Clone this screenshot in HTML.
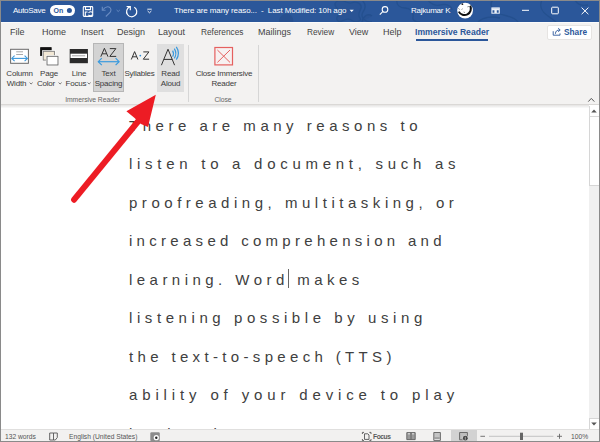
<!DOCTYPE html>
<html><head><meta charset="utf-8">
<style>
*{margin:0;padding:0;box-sizing:border-box}
html,body{width:600px;height:442px;overflow:hidden;background:#fff}
body{position:relative;font-family:"Liberation Sans",sans-serif;color:#444}
.a{position:absolute;white-space:pre}
#title{left:0;top:0;width:600px;height:22px;background:#2b579a;border-top:1px solid #8a8a8a}
#tabs{left:0;top:22px;width:600px;height:82px;background:#f3f2f1;border-top:1px solid #fbfbfb}
.tab{top:27px;font-size:9px;line-height:10px;color:#444}
.rl{font-size:8px;line-height:10.3px;color:#3c3c3c;text-align:center;letter-spacing:-0.2px}
.gl{font-size:6.8px;line-height:9px;color:#666;text-align:center;letter-spacing:-0.1px}
.doc{left:129px;font-size:15px;line-height:18px;color:#404040}
#status{left:0;top:429px;width:600px;height:13px;background:#f2f1f0;border-top:1px solid #e0dfde}
.st{top:432px;font-size:6.7px;line-height:9px;color:#555}
svg{position:absolute;left:0;top:0}
</style></head><body>
<!-- title bar -->
<div class="a" id="title"></div>
<svg width="600" height="22" viewBox="0 0 600 22" fill="none" style="top:0;clip-path:inset(1px 0 0 0)">
 <g stroke="#24508e" stroke-width="1.3" fill="#2a5495" opacity="0.9">
  <path d="M279 22 C279 17 283 13 288 14 C292 15 294 19 293 22 Z" stroke="none" fill="#27508f"/>
  <path d="M338 1 C343 -1 348 4 351 3 C356 1 362 3 361 8 C360 12 357 14 360 18 C362 21 356 23 353 21 C349 18 346 19 342 21 C338 23 335 19 338 16 C340 13 339 10 336 7 C334 4 335 2 338 1 Z"/>
  <path d="M362 22 C363 16 368 13 372 16"/>
  <path d="M362 0 C366 4 366 8 363 12 C360 17 364 22 372 22" fill="none"/>
  <path d="M397 0 C396 5 400 8 405 8 C410 8 414 12 413 17 C412 20 415 22 420 22" fill="none"/>
  <path d="M428 0 C430 4 436 6 440 5 C446 3 452 6 452 10" fill="none"/>
  <path d="M493 0 C488 5 494 12 500 14 C507 16 515 17 518 22" fill="none"/>
  <path d="M478 22 C483 17 492 16 500 18" fill="none"/>
  <path d="M542 0 C539 6 542 12 548 16 C552 19 555 21 556 22" fill="none"/>
  <path d="M575 0 C577 4 582 6 588 5" fill="none"/>
 </g>
</svg>
<div class="a" style="left:13px;top:5.6px;font-size:8px;line-height:9px;color:#fff;letter-spacing:-0.3px">AutoSave</div>
<div class="a" style="left:50px;top:5px;width:25px;height:11px;border-radius:6px;background:#fff"></div>
<div class="a" style="left:53.5px;top:6px;font-size:7px;line-height:9px;color:#2b579a;font-weight:bold">On</div>

<div class="a" style="left:174px;top:5.6px;font-size:8px;line-height:9px;color:#fff;letter-spacing:-0.11px">There are many reaso...  -  Last Modified: 10h ago</div>
<div class="a" style="left:411px;top:5.6px;font-size:8px;line-height:9px;color:#fff;letter-spacing:-0.25px">Rajkumar K</div>

<!-- tabs -->
<div class="a" id="tabs"></div>
<div class="a tab" style="left:10px">File</div>
<div class="a tab" style="left:42px">Home</div>
<div class="a tab" style="left:81px">Insert</div>
<div class="a tab" style="left:117px">Design</div>
<div class="a tab" style="left:158px">Layout</div>
<div class="a tab" style="left:201px;font-size:8.3px">References</div>
<div class="a tab" style="left:258px">Mailings</div>
<div class="a tab" style="left:307px;font-size:8.3px">Review</div>
<div class="a tab" style="left:349px">View</div>
<div class="a tab" style="left:383px">Help</div>
<div class="a tab" style="left:415px;font-weight:bold;color:#2b579a;font-size:8.6px">Immersive Reader</div>
<div class="a" style="left:415.5px;top:39px;width:72.5px;height:2px;background:#2b579a"></div>
<div class="a" style="left:547px;top:25px;width:45px;height:15px;background:#fff;border:1px solid #e6e4e2;border-radius:2px"></div>
<div class="a tab" style="left:564px;font-weight:bold;color:#2b579a;font-size:8.3px">Share</div>

<!-- ribbon -->
<div class="a" style="left:93px;top:43px;width:31px;height:49px;background:#d3d3d3;border:1px solid #b6b6b6"></div>
<div class="a" style="left:157px;top:44px;width:27px;height:48px;background:#dfdfdf"></div>
<div class="a rl" style="left:0px;top:69px;width:39px">Column<br>Width   </div>
<div class="a rl" style="left:34px;top:69px;width:30px">Page<br>Color   </div>
<div class="a rl" style="left:64px;top:69px;width:30px">Line<br>Focus   </div>
<div class="a rl" style="left:93px;top:69px;width:31px">Text<br>Spacing</div>
<div class="a rl" style="left:123px;top:69px;width:33px">Syllables</div>
<div class="a rl" style="left:157px;top:69px;width:27px">Read<br>Aloud</div>
<div class="a rl" style="left:184px;top:69px;width:80px">Close Immersive<br>Reader</div>
<div class="a gl" style="left:47.5px;top:95px;width:90px;letter-spacing:-0.05px">Immersive Reader</div>
<div class="a gl" style="left:188px;top:95px;width:70px">Close</div>
<div class="a" style="left:188px;top:45px;width:1px;height:57px;background:#d6d6d6"></div>
<div class="a" style="left:258px;top:45px;width:1px;height:57px;background:#d6d6d6"></div>
<div class="a" style="left:0;top:104px;width:600px;height:1px;background:#dad8d6"></div>
<div class="a" style="left:0;top:105px;width:589px;height:3px;background:linear-gradient(#e4e3e2,#fbfbfb)"></div>

<!-- document -->
<div class="a doc" style="top:117px;letter-spacing:4.517px">There are many reasons to</div>
<div class="a doc" style="top:155px;letter-spacing:4.725px">listen to a document, such as</div>
<div class="a doc" style="top:194px;letter-spacing:4.528px">proofreading, multitasking, or</div>
<div class="a doc" style="top:232px;letter-spacing:4.292px">increased comprehension and</div>
<div class="a doc" style="top:271px;letter-spacing:4.458px">learning. Word makes</div>
<div class="a doc" style="top:309px;letter-spacing:4.577px">listening possible by using</div>
<div class="a doc" style="top:348px;letter-spacing:4.343px">the text-to-speech (TTS)</div>
<div class="a doc" style="top:386px;letter-spacing:4.859px">ability of your device to play</div>
<div class="a doc" style="top:425px;letter-spacing:4.7px">back written text as</div>
<div class="a" style="left:288px;top:269px;width:1px;height:19px;background:#666"></div>

<!-- scrollbar -->
<div class="a" style="left:589px;top:106px;width:10px;height:323px;background:#f0f0f0"></div>
<div class="a" style="left:589px;top:106px;width:10px;height:11px;background:#fff;border-left:1px solid #d9d9d9;border-bottom:1px solid #d9d9d9"></div>
<div class="a" style="left:589px;top:117px;width:10px;height:69px;background:#fff;border-left:1px solid #d6d6d6;border-bottom:1px solid #d6d6d6"></div>
<div class="a" style="left:589px;top:418px;width:10px;height:11px;background:#fff;border-left:1px solid #d6d6d6;border-top:1px solid #d6d6d6"></div>

<!-- status -->
<div class="a" id="status"></div>
<div class="a" style="left:451px;top:430px;width:26px;height:11px;background:#d2d2d2"></div>
<div class="a st" style="left:5px">132 words</div>
<div class="a st" style="left:69px">English (United States)</div>
<div class="a st" style="left:373px;font-weight:bold;letter-spacing:-0.45px;color:#5a5a5a">Focus</div>
<div class="a st" style="left:571px">100%</div>

<svg width="600" height="442" viewBox="0 0 600 442" fill="none">
 <!-- title bar icons -->

 <circle cx="69.4" cy="10.4" r="2.5" fill="#2b579a"/>
 <g stroke="#fff" stroke-width="1.1">
  <rect x="83.3" y="6.6" width="9.4" height="9.8" rx="0.8"/>
  <path d="M85.5 6.8 V9.6 H90.5 V6.8"/>
  <path d="M85.3 16.2 V12 H87.5"/>
 </g>
 <g stroke="#fff" stroke-width="1.1">
  <path d="M88.6 13 A2.4 2.4 0 0 1 92.6 12.6"/>
  <path d="M92.4 14.5 A2.4 2.4 0 0 1 88.4 14.9"/>
 </g>
 <g stroke="#6a8cc2" stroke-width="1.1">
  <path d="M102.6 10 C104.5 7.5 107 6.2 109 7 C111.3 8 111.5 10.5 110 12.5 L105.8 16.5"/>
  <path d="M102.3 6.8 V10.3 H105.6"/>
  <path d="M116.6 10 L118.2 11.5 L119.8 10" stroke-width="0.9"/>
 </g>
 <g stroke="#fff" stroke-width="1.2">
  <path d="M134.3 7.3 A5.1 5.1 0 1 1 129.9 6.9"/>
  <path d="M126.6 6.5 H130.3 V10.2"/>
 </g>
 <g stroke="#fff" stroke-width="0.9">
  <path d="M147.3 9.2 H151.7"/>
  <path d="M147.6 11 L149.5 12.8 L151.4 11"/>
 </g>
 <path d="M349.6 9.8 H353.8 L351.7 12.1 Z" fill="#fff"/>
 <g stroke="#fff" stroke-width="1.1">
  <circle cx="385" cy="9.4" r="2.8"/>
  <path d="M383 11.4 L379.8 14.6"/>
 </g>
 <circle cx="465.1" cy="10.6" r="7.9" fill="#fff"/>
 <path d="M458.8 11.6 A6.3 6.3 0 1 0 470.2 5.8" stroke="#111" stroke-width="2"/>
 <circle cx="462.4" cy="4.2" r="0.9" fill="#222"/>
 <path d="M458.4 8.2 L459.6 9.6 M467.3 6.9 L469 6.4 M463.6 12 L465 12.6 M461.5 9.5 L462.7 8.8" stroke="#888" stroke-width="0.9"/>
 <g stroke="#fff" stroke-width="1">
  <rect x="491.4" y="7.4" width="8.4" height="6.3" fill="#eef2f8" stroke="none"/>
  <path d="M492.5 10.2 H494.4 V12.8 H492.5 Z M496.8 10.2 H498.7 V12.8 H496.8 Z" fill="#2b579a" stroke="none"/>
  <path d="M492.3 8.6 H498.9" stroke="#c9d4e6" stroke-width="0.8"/>
  <path d="M522 10.3 H529"/>
  <rect x="551.7" y="7.2" width="6.6" height="6.6" rx="0.8"/>
  <path d="M581.6 7.6 L588.4 14.2 M588.4 7.6 L581.6 14.2"/>
 </g>
 <g stroke="#2b579a" stroke-width="0.9">
  <path d="M553.2 31.2 V35.2 H560 V33.4"/>
  <path d="M555.4 33.8 C555.6 31 557 30 559.8 30"/>
  <path d="M558.2 28.2 L560.2 30 L558.2 31.8"/>
 </g>
 <!-- ribbon icons -->
 <rect x="10.6" y="49.3" width="17.8" height="14" fill="#fff" stroke="#6a6a6a" stroke-width="1"/>
 <path d="M16.2 51.8 H23 M16.2 54.5 H23" stroke="#a9a9a9" stroke-width="1"/>
 <g stroke="#3c98dc" stroke-width="1.1">
  <path d="M12 58.4 H27.2"/>
  <path d="M14.6 55.6 L11.8 58.4 L14.6 61.2 M24.6 55.6 L27.4 58.4 L24.6 61.2"/>
 </g>
 <rect x="40.6" y="47.6" width="10.6" height="8" fill="#111" stroke="#111" stroke-width="0.8"/>
 <rect x="43.2" y="51.3" width="11.2" height="8.8" fill="#f3e9d6" stroke="#fff" stroke-width="2.2"/>
 <rect x="43.2" y="51.3" width="11.2" height="8.8" fill="#f3e9d6" stroke="#7a7a7a" stroke-width="0.9"/>
 <rect x="47" y="56.3" width="11" height="8.7" fill="#fff" stroke="#fff" stroke-width="2.2"/>
 <rect x="47" y="56.3" width="11" height="8.7" fill="#fff" stroke="#666" stroke-width="0.9"/>
 <rect x="69.7" y="49" width="18.2" height="14.2" fill="#2b2b2b"/>
 <rect x="70.5" y="53.7" width="16.5" height="4.3" fill="#fff"/>
 <path d="M72 55.8 H85.2" stroke="#999" stroke-width="0.9"/>
 <g stroke="#333" stroke-width="1" stroke-linejoin="miter">
  <path d="M100.8 56.7 L104.4 48.3 L108 56.7 M102.1 53.8 H106.8"/>
  <path d="M109.8 48.6 H115.9 L109.8 56.4 H116.2"/>
 </g>
 <g stroke="#3a9ade" stroke-width="1.2">
  <path d="M98.4 61.7 H119"/>
  <path d="M101.8 58.2 L98.3 61.7 L101.8 65.2 M115.6 58.2 L119.1 61.7 L115.6 65.2"/>
 </g>
 <g stroke="#333" stroke-width="1">
  <path d="M131.3 59.5 L134.6 51.6 L137.9 59.5 M132.5 56.8 H136.7"/>
  <path d="M143.3 51.9 H148.9 L143.3 59.2 H149.1"/>
 </g>
 <circle cx="140.3" cy="55.6" r="0.9" fill="#2f8fd8"/>
 <g stroke="#333" stroke-width="1">
  <path d="M161.4 65.2 L168 49.2 L174.6 65.2 M163.8 59.4 H172.2"/>
 </g>
 <g stroke="#3a9ade" stroke-width="1.2">
  <path d="M172.6 50.6 Q174.4 53.6 172.6 56.6"/>
  <path d="M174.3 48.6 Q177.4 53.5 174.3 58.3"/>
  <path d="M176.3 46.9 Q180.6 53.3 176.3 59.7"/>
 </g>
 <rect x="214.9" y="47.5" width="17.6" height="17.4" fill="#f7f1f1" stroke="#e5605f" stroke-width="1.2"/>
 <path d="M217.4 50 L230 62.4 M230 50 L217.4 62.4" stroke="#e5605f" stroke-width="1"/>
 <g stroke="#555" stroke-width="0.8">
  <path d="M29.6 82.6 L31.1 84 L32.6 82.6"/>
  <path d="M58.6 82.6 L60.1 84 L61.6 82.6"/>
  <path d="M87.6 82.6 L89.1 84 L90.6 82.6"/>
 </g>
 <path d="M588.3 101.6 L591.3 98.4 L594.3 101.6" stroke="#555" stroke-width="1"/>
 <!-- scroll arrows -->
 <path d="M591.2 112.6 L594 109.6 L596.8 112.6 Z" fill="#555"/>
 <path d="M591.2 422.6 L594 425.6 L596.8 422.6 Z" fill="#555"/>
 <!-- red arrow -->
 <path d="M74.1 199.7 L138 121.5" stroke="#ed1c24" stroke-width="6" stroke-linecap="round"/>
 <path d="M155.8 94.8 L126.4 111.3 L134 117.6 L141 124 L148 127 Z" fill="#ed1c24"/>
 <!-- status icons -->
 <g stroke="#555" stroke-width="0.9">
  <path d="M49.7 433 H53.5 V440 H49.7 Z M53.5 433 H57.3 V437.5 L55.3 440 H53.5"/>
 </g>
 <rect x="150.3" y="432.3" width="9.5" height="8.8" rx="1.2" fill="#8c8c8c"/>
 <circle cx="156.3" cy="437.7" r="2.6" fill="#fff"/>
 <circle cx="156.3" cy="437.7" r="1.2" fill="#222"/>
 <g stroke="#555" stroke-width="0.9">
  <path d="M362.4 434 V432.4 H364 M369.4 432.4 H371 V434 M371 439 V440.6 H369.4 M364 440.6 H362.4 V439"/>
  <path d="M364.5 433.8 H367.8 L369 435 V439.4 H364.5 Z"/>
 </g>
 <g stroke="#606060" stroke-width="0.9">
  <path d="M406.8 432.6 H415.2 V439.6 H406.8 Z" fill="#9a9a9a"/>
  <path d="M411 432.8 V439.6"/>
  <path d="M433.8 432.5 H440.4 V440.4 H433.8 Z" fill="#c4c4c4"/>
  <path d="M434.6 438.2 H439.6" stroke="#555"/>
  <path d="M459.6 432.5 H467.4 V439.8 H459.6 Z" fill="#bdbdbd"/>
 </g>
 <path d="M407.8 433.8 H410 M412 433.8 H414.2" stroke="#eee" stroke-width="0.9"/>
 <path d="M434.5 439.2 H439.7" stroke="#f4f4f4" stroke-width="0.9"/>
 <circle cx="465.3" cy="438.2" r="3" fill="#d2d2d2"/>
 <circle cx="465.3" cy="438.2" r="2.4" fill="#444"/>
 <path d="M465.3 436.8 V439.8" stroke="#ccc" stroke-width="0.7"/>
 <g stroke="#666" stroke-width="0.9">
  <path d="M480.4 436.3 H485 M557 436.3 H562 M559.5 433.8 V438.8"/>
 </g>
 <path d="M489 436.3 H553.4" stroke="#b8b8b8" stroke-width="0.8"/>
 <rect x="520" y="432.7" width="3" height="7.3" fill="#666"/>
</svg>

<!-- borders -->
<div class="a" style="left:0;top:0;width:1px;height:442px;background:#8a8a8a"></div>
<div class="a" style="left:599px;top:0;width:1px;height:442px;background:#8a8a8a"></div>
<div class="a" style="left:0;top:441px;width:600px;height:1px;background:#8a8a8a"></div>
</body></html>
